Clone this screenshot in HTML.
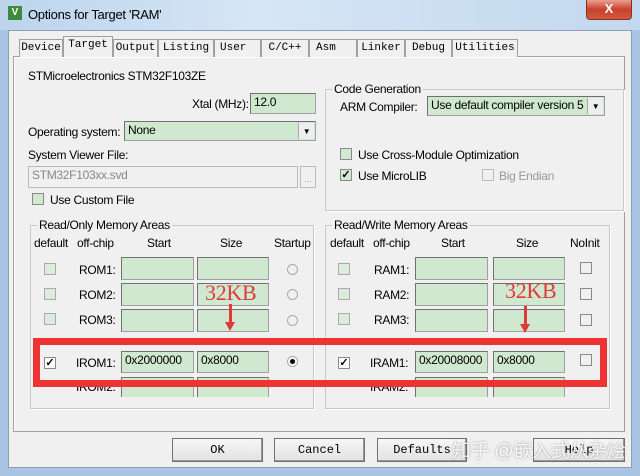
<!DOCTYPE html><html><head><style>
*{box-sizing:border-box}body{margin:0;width:640px;height:476px;overflow:hidden;font-family:"Liberation Sans",sans-serif;font-size:12px;color:#000;background:#a9c5e3;position:relative}
.a{position:absolute}
.t{position:absolute;white-space:nowrap;font-size:12px;letter-spacing:-0.3px}
.in{position:absolute;background:#cfe8cf;border:1px solid #a0a0a0;border-top-color:#707070;border-left-color:#707070;font-size:12px;padding:1px 3px;letter-spacing:-0.3px}
.cb{position:absolute;width:12px;height:12px;border:1px solid #8a8a8a;background:#d2e8d2;font-size:11px;line-height:10px;text-align:center;font-weight:bold}
.rd{position:absolute;width:11px;height:11px;border:1px solid #aaa;border-radius:50%;background:#f0f0f0}
.grp{position:absolute;border:1px solid #c8c8c8;box-shadow:1px 1px 0 #fff}
.gl{position:absolute;background:#f0f0f0;padding:0 2px;top:-8px;left:6px;font-size:12px;letter-spacing:-0.3px}
.tab{position:absolute;top:39px;height:18px;border:1px solid #a0a0a0;border-bottom:none;background:#f0f0f0;font-family:"Liberation Mono",monospace;font-size:11px;text-align:center;line-height:16px}
.btn{position:absolute;top:438px;height:24px;border:1px solid #707070;background:linear-gradient(#f6f6f6,#e2e2e2);font-family:"Liberation Mono",monospace;font-size:12px;text-align:center;line-height:22px;box-shadow:inset -1px -1px 0 #999}
.dd{position:absolute;right:1px;top:1px;bottom:1px;width:16px;background:#eee;border-left:1px solid #aaa;font-size:8px;text-align:center;line-height:17px}
.red{color:#e03a3a;font-family:"Liberation Serif",serif;font-size:22px}
</style></head><body>
<div class="a" style="left:0;top:0;width:640px;height:30px;background:linear-gradient(90deg,#bcd4ec,#d6e6f6 40%,#c2d8ee)"></div>
<div class="a" style="left:8px;top:6px;width:14px;height:14px;background:#3d8a3d;color:#fff;font-size:10px;line-height:14px;text-align:center;font-weight:bold">V</div>
<div class="t" style="left:28px;top:7px;font-size:13px">Options for Target 'RAM'</div>
<div class="a" style="left:586px;top:0;width:46px;height:20px;background:linear-gradient(#e8a090,#c8402c 50%,#d05a40);border:1px solid #8a3020;border-top:none;border-radius:0 0 4px 4px;color:#fff;font-weight:bold;text-align:center;line-height:18px;font-size:13px">X</div>
<div class="a" style="left:8px;top:30px;width:624px;height:438px;background:#f0f0f0;border:1px solid #8aa0b8"></div>
<div class="a" style="left:13px;top:56px;width:612px;height:376px;border:1px solid #a0a0a0;background:#f0f0f0;box-shadow:inset 1px 1px 0 #fff"></div>
<div class="tab" style="left:19px;width:44px">Device</div>
<div class="tab" style="left:63px;width:50px;top:36px;height:21px;background:#f0f0f0;z-index:2">Target</div>
<div class="tab" style="left:113px;width:45px">Output</div>
<div class="tab" style="left:158px;width:56px">Listing</div>
<div class="tab" style="left:214px;width:47px;text-align:left;padding-left:5px">User</div>
<div class="tab" style="left:261px;width:48px">C/C++</div>
<div class="tab" style="left:309px;width:48px;text-align:left;padding-left:6px">Asm</div>
<div class="tab" style="left:357px;width:48px">Linker</div>
<div class="tab" style="left:405px;width:47px">Debug</div>
<div class="tab" style="left:452px;width:66px">Utilities</div>
<div class="t" style="left:28px;top:69px">STMicroelectronics STM32F103ZE</div>
<div class="t" style="left:192px;top:97px">Xtal (MHz):</div>
<div class="in" style="left:250px;top:93px;width:66px;height:21px">12.0</div>
<div class="grp" style="left:325px;top:89px;width:299px;height:122px"><span class="gl">Code Generation</span></div>
<div class="t" style="left:340px;top:100px">ARM Compiler:</div>
<div class="in" style="left:427px;top:96px;width:178px;height:20px">Use default compiler version 5<div class="dd">▼</div></div>
<div class="t" style="left:28px;top:125px">Operating system:</div>
<div class="in" style="left:124px;top:121px;width:192px;height:20px">None<div class="dd">▼</div></div>
<div class="t" style="left:28px;top:148px">System Viewer File:</div>
<div class="in" style="left:28px;top:166px;width:270px;height:22px;background:#f0f0f0;color:#888;border-color:#bbb">STM32F103xx.svd</div>
<div class="a" style="left:300px;top:166px;width:16px;height:22px;border:1px solid #bbb;color:#999;font-size:9px;text-align:center;line-height:24px">...</div>
<div class="cb" style="left:32px;top:193px"></div><div class="t" style="left:50px;top:193px">Use Custom File</div>
<div class="cb" style="left:340px;top:148px"></div><div class="t" style="left:358px;top:148px">Use Cross-Module Optimization</div>
<div class="cb" style="left:340px;top:169px">✓</div><div class="t" style="left:358px;top:169px">Use MicroLIB</div>
<div class="cb" style="left:482px;top:169px;background:#f0f0f0;border-color:#bbb"></div><div class="t" style="left:499px;top:169px;color:#999">Big Endian</div>
<div class="grp" style="left:30px;top:225px;width:284px;height:184px"><span class="gl">Read/Only Memory Areas</span></div>
<div class="grp" style="left:325px;top:225px;width:285px;height:184px"><span class="gl">Read/Write Memory Areas</span></div>
<div class="t" style="left:34px;top:236px">default</div><div class="t" style="left:77px;top:236px">off-chip</div><div class="t" style="left:147px;top:236px">Start</div><div class="t" style="left:220px;top:236px">Size</div><div class="t" style="left:274px;top:236px">Startup</div>
<div class="t" style="left:330px;top:236px">default</div><div class="t" style="left:373px;top:236px">off-chip</div><div class="t" style="left:441px;top:236px">Start</div><div class="t" style="left:516px;top:236px">Size</div><div class="t" style="left:570px;top:236px">NoInit</div>

<div class="cb" style="left:44px;top:263px;background:#dcebdc;border-color:#aaa"></div><div class="t" style="left:79px;top:263px">ROM1:</div><div class="in" style="left:121px;top:257px;width:73px;height:23px"></div><div class="in" style="left:197px;top:257px;width:72px;height:23px"></div><div class="rd" style="left:287px;top:264px"></div>
<div class="cb" style="left:44px;top:288px;background:#dcebdc;border-color:#aaa"></div><div class="t" style="left:79px;top:288px">ROM2:</div><div class="in" style="left:121px;top:283px;width:73px;height:23px"></div><div class="in" style="left:197px;top:283px;width:72px;height:23px"></div><div class="rd" style="left:287px;top:289px"></div>
<div class="cb" style="left:44px;top:313px;background:#dcebdc;border-color:#aaa"></div><div class="t" style="left:79px;top:313px">ROM3:</div><div class="in" style="left:121px;top:309px;width:73px;height:23px"></div><div class="in" style="left:197px;top:309px;width:72px;height:23px"></div><div class="rd" style="left:287px;top:315px"></div>
<div class="cb" style="left:44px;top:357px;background:#fff">✓</div><div class="t" style="left:76px;top:356px">IROM1:</div><div class="in" style="left:121px;top:351px;width:73px;height:22px">0x2000000</div><div class="in" style="left:197px;top:351px;width:72px;height:22px">0x8000</div><div class="rd" style="left:287px;top:356px;background:radial-gradient(#000 2px,#fff 3px)"></div>
<div class="t" style="left:76px;top:380px">IROM2:</div><div class="in" style="left:121px;top:377px;width:73px;height:20px;border-bottom:none"></div><div class="in" style="left:197px;top:377px;width:72px;height:20px;border-bottom:none"></div>

<div class="cb" style="left:338px;top:263px;background:#dcebdc;border-color:#aaa"></div><div class="t" style="left:374px;top:263px">RAM1:</div><div class="in" style="left:415px;top:257px;width:73px;height:23px"></div><div class="in" style="left:493px;top:257px;width:72px;height:23px"></div><div class="cb" style="left:580px;top:262px;background:#f0f0f0"></div>
<div class="cb" style="left:338px;top:288px;background:#dcebdc;border-color:#aaa"></div><div class="t" style="left:374px;top:288px">RAM2:</div><div class="in" style="left:415px;top:283px;width:73px;height:23px"></div><div class="in" style="left:493px;top:283px;width:72px;height:23px"></div><div class="cb" style="left:580px;top:288px;background:#f0f0f0"></div>
<div class="cb" style="left:338px;top:313px;background:#dcebdc;border-color:#aaa"></div><div class="t" style="left:374px;top:313px">RAM3:</div><div class="in" style="left:415px;top:309px;width:73px;height:23px"></div><div class="in" style="left:493px;top:309px;width:72px;height:23px"></div><div class="cb" style="left:580px;top:314px;background:#f0f0f0"></div>
<div class="cb" style="left:338px;top:357px;background:#fff">✓</div><div class="t" style="left:370px;top:356px">IRAM1:</div><div class="in" style="left:415px;top:351px;width:73px;height:22px">0x20008000</div><div class="in" style="left:493px;top:351px;width:72px;height:22px">0x8000</div><div class="cb" style="left:580px;top:354px;background:#f0f0f0"></div>
<div class="t" style="left:370px;top:380px">IRAM2:</div><div class="in" style="left:415px;top:377px;width:73px;height:20px;border-bottom:none"></div><div class="in" style="left:493px;top:377px;width:72px;height:20px;border-bottom:none"></div>
<div class="a" style="left:32px;top:387px;width:580px;height:10px;background:transparent"></div>

<div class="a" style="left:33px;top:338px;width:574px;height:49px;border:7px solid #ee3333"></div>
<div class="t red" style="left:205px;top:280px">32KB</div>
<div class="a" style="left:229px;top:304px;width:3px;height:20px;background:#e03a3a"></div><div class="a" style="left:225px;top:322px;border:5px solid transparent;border-top:9px solid #e03a3a"></div>
<div class="t red" style="left:505px;top:278px">32KB</div>
<div class="a" style="left:524px;top:306px;width:3px;height:20px;background:#e03a3a"></div><div class="a" style="left:520px;top:324px;border:5px solid transparent;border-top:9px solid #e03a3a"></div>

<div class="btn" style="left:172px;width:91px">OK</div>
<div class="btn" style="left:274px;width:91px">Cancel</div>
<div class="btn" style="left:377px;width:90px">Defaults</div>
<div class="btn" style="left:533px;width:92px">Help</div>
<div class="t" style="left:452px;top:436px;font-size:19px;color:rgba(255,255,255,.85);font-family:'Liberation Sans','Noto Sans CJK SC',sans-serif;text-shadow:0 0 2px rgba(0,0,0,.35)">知乎 @嵌入式从杂烩</div>
</body></html>
